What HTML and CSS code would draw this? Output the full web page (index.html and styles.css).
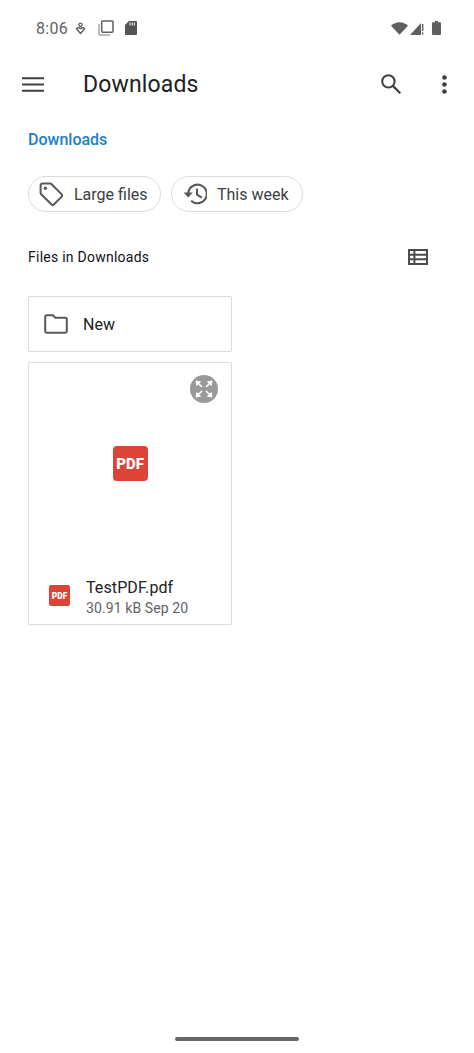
FILE: index.html
```html
<!DOCTYPE html>
<html lang="en">
<head>
    <meta charset="UTF-8">
    <meta name="viewport" content="width=device-width, initial-scale=1.0">
    <title>Downloads</title>
    <link rel="stylesheet" href="styles.css">
</head>
<body>
    <div class="status-bar">
        <div class="status-left">
            <span class="clock">8:06</span>
            <svg class="st-key" viewBox="0 0 12 14"><circle cx="6" cy="3" r="1.8" fill="none" stroke="#5f5f5f" stroke-width="1.4"/><path d="M1.5 7 L4 6 L6 7.2 L8 6 L10.5 7 L6 12.5 Z" fill="none" stroke="#5f5f5f" stroke-width="1.5" stroke-linejoin="round"/></svg>
            <svg class="st-copy" viewBox="0 0 16 16"><rect x="3.7" y="1" width="11.3" height="11.3" rx="1" fill="none" stroke="#5f5f5f" stroke-width="1.5"/><path d="M1 4v10a1 1 0 0 0 1 1h10" fill="none" stroke="#a5a5a5" stroke-width="1.5"/></svg>
            <svg class="st-sd" viewBox="0 0 12 14"><path d="M4 0h7a1 1 0 0 1 1 1v12a1 1 0 0 1-1 1H1a1 1 0 0 1-1-1V4z" fill="#555"/><path d="M5 1.5v3M7.2 1.5v3M9.4 1.5v3" stroke="#fff" stroke-width="1"/></svg>
        </div>
        <div class="status-right">
            <svg class="st-wifi" viewBox="0 0 18 13"><path d="M0 3.6C2.4 1.3 5.5 0 9 0s6.6 1.3 9 3.6L9 13z" fill="#5f5f5f"/></svg>
            <svg class="st-signal" viewBox="0 0 14 14"><path d="M0 14L11 2v12z" fill="#5f5f5f"/><path d="M12.7 3v7M12.7 11.5v2" stroke="#5f5f5f" stroke-width="1.4"/></svg>
            <svg class="st-batt" viewBox="0 0 9 14"><path d="M3 0h3v1.2h2a1 1 0 0 1 1 1V13a1 1 0 0 1-1 1H1a1 1 0 0 1-1-1V2.2a1 1 0 0 1 1-1h2z" fill="#5f5f5f"/></svg>
        </div>
    </div>

    <header class="app-bar">
        <svg class="menu-icon" viewBox="0 0 22 15"><path d="M0 1.2h22M0 7.5h22M0 13.8h22" stroke="#3c4043" stroke-width="2"/></svg>
        <h1 class="app-title">Downloads</h1>
        <svg class="search-icon" viewBox="0 0 20 20"><circle cx="7.4" cy="7.4" r="6.2" fill="none" stroke="#3c4043" stroke-width="2"/><path d="M11.9 11.9l7.4 7.4" stroke="#3c4043" stroke-width="2.2"/></svg>
        <svg class="more-icon" viewBox="0 0 5 19"><circle cx="2.5" cy="2.5" r="2.3" fill="#3c4043"/><circle cx="2.5" cy="9.5" r="2.3" fill="#3c4043"/><circle cx="2.5" cy="16.5" r="2.3" fill="#3c4043"/></svg>
    </header>

    <main class="content">
        <div class="crumb">Downloads</div>

        <div class="chips">
            <div class="chip chip-large">
                <svg class="chip-icon" viewBox="0 0 24 24"><path d="M1.6 3.4v7.4a2 2 0 0 0 .6 1.4l10.1 10.1a2 2 0 0 0 2.8 0l7.4-7.4a2 2 0 0 0 0-2.8L12.4 2a2 2 0 0 0-1.4-.6H3.6a2 2 0 0 0-2 2z" fill="none" stroke="#55585c" stroke-width="2"/><circle cx="6.4" cy="6.2" r="1.7" fill="#55585c"/></svg>
                <span>Large files</span>
            </div>
            <div class="chip chip-week">
                <svg class="chip-icon" viewBox="0 0 24 24"><path d="M5.2 11.5a9.3 9.3 0 1 1 2.9 7.2" fill="none" stroke="#55585c" stroke-width="2.1"/><path d="M0.6 10.6h9.2l-4.6 5z" fill="#55585c"/><path d="M14 6.5v6.2l4.8 2.9" fill="none" stroke="#55585c" stroke-width="2"/></svg>
                <span>This week</span>
            </div>
        </div>

        <div class="section-head">
            <span class="section-title">Files in Downloads</span>
            <svg class="list-icon" viewBox="0 0 20 16"><path d="M1 1h18v14H1zM1 5.7h18M1 10.3h18M6.4 1v14" fill="none" stroke="#4a4d50" stroke-width="2"/></svg>
        </div>

        <div class="grid">
            <div class="card folder-card">
                <svg class="folder-icon" viewBox="0 0 24 20"><path d="M1.2 2.6a1.4 1.4 0 0 1 1.4-1.4h6.3l2.4 2.5h10.1a1.4 1.4 0 0 1 1.4 1.4v12.2a1.4 1.4 0 0 1-1.4 1.4H2.6a1.4 1.4 0 0 1-1.4-1.4z" fill="none" stroke="#55585c" stroke-width="2"/></svg>
                <span class="folder-name">New</span>
            </div>

            <div class="card file-card">
                <div class="expand-btn">
                    <svg viewBox="0 0 28 28"><path d="M5.5 5.5l5.8 1-4.8 4.8zM22.5 5.5l-1 5.8-4.8-4.8zM5.5 22.5l1-5.8 4.8 4.8zM22.5 22.5l-5.8-1 4.8-4.8z" fill="#fff"/><path d="M8 8l4 4M20 8l-4 4M8 20l4-4M20 20l-4-4" stroke="#fff" stroke-width="1.6"/></svg>
                </div>
                <div class="preview">
                    <div class="pdf-badge pdf-big">PDF</div>
                </div>
                <div class="file-info">
                    <div class="pdf-badge pdf-small">PDF</div>
                    <div class="file-text">
                        <div class="file-name">TestPDF.pdf</div>
                        <div class="file-meta">30.91 kB Sep 20</div>
                    </div>
                </div>
            </div>
        </div>
    </main>

    <div class="nav-pill"></div>
</body>
</html>
```

FILE: styles.css
```css
body {
    margin: 0;
    width: 474px;
    height: 1053px;
    overflow: hidden;
    background: #ffffff;
    font-family: Roboto, "Liberation Sans", sans-serif;
    color: #202124;
    position: relative;
}

/* status bar */
.status-bar {
    height: 56px;
    display: flex;
    align-items: center;
    justify-content: space-between;
    padding: 0 33px 0 36px;
    box-sizing: border-box;
}

.status-left,
.status-right {
    display: flex;
    align-items: center;
}

.clock {
    font-size: 16px;
    color: #5f5f5f;
    letter-spacing: 0.3px;
    margin-right: 7px;
}

.st-key {
    width: 11px;
    height: 13px;
    margin-right: 12px;
}

.st-copy {
    width: 16px;
    height: 16px;
    margin-right: 11px;
}

.st-sd {
    width: 12px;
    height: 14px;
}

.st-wifi {
    width: 17px;
    height: 13px;
    margin-right: 2px;
}

.st-signal {
    width: 14px;
    height: 14px;
    margin-right: 8px;
}

.st-batt {
    width: 9px;
    height: 14px;
}

/* app bar */
.app-bar {
    height: 56px;
    display: flex;
    align-items: center;
    padding: 0 27px 0 22px;
}

.menu-icon {
    width: 22px;
    height: 15px;
    margin-right: 39px;
}

.app-title {
    flex: 1;
    margin: 1px 0 0;
    font-size: 23px;
    font-weight: 400;
    letter-spacing: 0.15px;
    color: #202124;
}

.search-icon {
    width: 20px;
    height: 20px;
    margin-right: 41px;
}

.more-icon {
    width: 5px;
    height: 19px;
}

/* content */
.content {
    padding: 0 28px;
}

.crumb {
    margin-top: 16px;
    font-size: 16px;
    font-weight: 500;
    line-height: 24px;
    color: #1a7fc9;
}

.chips {
    display: flex;
    gap: 10px;
    margin-top: 24px;
}

.chip {
    height: 36px;
    box-sizing: border-box;
    display: flex;
    align-items: center;
    border: 1px solid #dadce0;
    border-radius: 18px;
    font-size: 16px;
    color: #3c4043;
}

.chip-large {
    width: 133px;
    padding-left: 10px;
}

.chip-week {
    width: 132px;
    padding-left: 11px;
}

.chip-icon {
    width: 24px;
    height: 24px;
    margin-right: 11px;
    flex-shrink: 0;
}

.chip-week .chip-icon {
    margin-right: 10px;
}

.section-head {
    display: flex;
    align-items: center;
    justify-content: space-between;
    margin-top: 33px;
    height: 24px;
    padding-right: 18px;
}

.section-title {
    font-size: 14px;
    font-weight: 400;
    letter-spacing: 0.25px;
    color: #111111;
}

.list-icon {
    width: 20px;
    height: 16px;
}

/* cards */
.grid {
    width: 204px;
    display: flex;
    flex-direction: column;
    gap: 10px;
    margin-top: 27px;
}

.card {
    box-sizing: border-box;
    border: 1px solid #dcdcdc;
    border-radius: 2px;
    background: #ffffff;
    box-shadow: 0 0 1px #e4e4e4;
}

.folder-card {
    height: 56px;
    display: flex;
    align-items: center;
    padding-left: 15px;
}

.folder-icon {
    width: 24px;
    height: 20px;
    margin-right: 15px;
}

.folder-name {
    font-size: 16px;
    color: #202124;
}

.file-card {
    height: 263px;
    position: relative;
    display: flex;
    flex-direction: column;
}

.expand-btn {
    position: absolute;
    top: 12px;
    right: 13px;
    width: 28px;
    height: 28px;
    border-radius: 50%;
    background: #999999;
}

.expand-btn svg {
    display: block;
    width: 28px;
    height: 28px;
}

.preview {
    height: 210px;
    display: flex;
    justify-content: center;
    padding-top: 83px;
    box-sizing: border-box;
}

.pdf-badge {
    display: flex;
    align-items: center;
    justify-content: center;
    background: #db4437;
    color: #ffffff;
    font-family: Roboto, sans-serif;
    font-weight: 900;
    flex-shrink: 0;
}

.pdf-big {
    width: 35px;
    height: 35px;
    border-radius: 4px;
    font-size: 15px;
}

.pdf-small {
    width: 21px;
    height: 21px;
    border-radius: 2px;
    font-size: 8.5px;
    margin-left: 20px;
}

.file-info {
    display: flex;
    align-items: center;
    gap: 16px;
}

.file-text {
    padding-top: 5px;
}

.file-name {
    font-size: 16px;
    letter-spacing: 0.1px;
    line-height: 20px;
    color: #202124;
}

.file-meta {
    font-size: 14px;
    letter-spacing: 0.1px;
    line-height: 20px;
    color: #5f6368;
}

.nav-pill {
    position: absolute;
    left: 175px;
    top: 1037px;
    width: 124px;
    height: 4px;
    border-radius: 2px;
    background: #666666;
}
```
